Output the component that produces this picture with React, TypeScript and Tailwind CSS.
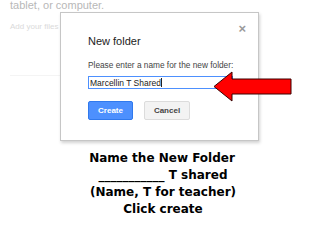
import React from "react";

export default function App() {
  return (
    <div className="relative w-[320px] h-[240px] overflow-hidden bg-white font-['Liberation_Sans',Arial,sans-serif]">
      {/* background page */}
      <div className="pl-[10px] pt-0">
        <div className="text-[11px] leading-[10px] text-[#b8b8b8]">tablet, or computer.</div>
        <div className="mt-[12px] text-[8px] leading-[10px] text-[#dadada]">Add your files</div>
        <div className="mt-[43px] h-px w-[60px] bg-[#f4f4f4]" />
      </div>

      {/* dialog */}
      <div className="absolute left-[60px] top-[12px] w-[199px] h-[129px] bg-white border border-[#c6c6c6] shadow-[1px_2px_3px_rgba(0,0,0,0.18)]">
        <div className="absolute right-[12px] top-[9px] text-[13px] leading-[13px] text-[#9a9a9a] font-bold">×</div>
        <div className="pl-[27px] pt-[22px]">
          <div className="text-[11px] leading-[12px] text-[#222]">New folder</div>
          <div className="mt-[13px] text-[8.3px] leading-[10px] text-[#444]">Please enter a name for the new folder:</div>
          <div className="mt-[6px] w-[145px] h-[13px] border border-[#4d90fe] flex items-center pl-[1px]">
            <span className="text-[8.5px] leading-[10px] text-[#222]">Marcellin T Shared</span>
            <span className="w-px h-[9px] bg-[#222]" />
          </div>
          <div className="mt-[12px] flex gap-[11px]">
            <div className="w-[45px] h-[19px] bg-[#4d90fe] border border-[#3079ed] rounded-[2px] flex items-center justify-center text-white text-[8px] font-bold">Create</div>
            <div className="w-[46px] h-[19px] bg-[#f3f3f3] border border-[#dcdcdc] rounded-[2px] flex items-center justify-center text-[#444] text-[8px] font-bold">Cancel</div>
          </div>
        </div>
      </div>

      {/* red arrow */}
      <svg className="absolute left-0 top-0" width="320" height="240" viewBox="0 0 320 240">
        <polygon
          points="214,86.5 232,72 232,79 291,79 291,94 232,94 232,101"
          fill="#ff0000"
          stroke="#3a0000"
          strokeWidth="1"
          strokeLinejoin="miter"
        />
      </svg>

      {/* instructions */}
      <div className="absolute left-0 right-0 top-[150px] flex flex-col items-center text-black font-['DejaVu_Sans',sans-serif] font-bold text-[12px] leading-[17px]">
        <div className="pl-[4px]">Name the New Folder</div>
        <div className="pl-[6px]">___________ T shared</div>
        <div className="pl-[6px]">(Name, T for teacher)</div>
        <div className="pl-[6px]">Click create</div>
      </div>
    </div>
  );
}
